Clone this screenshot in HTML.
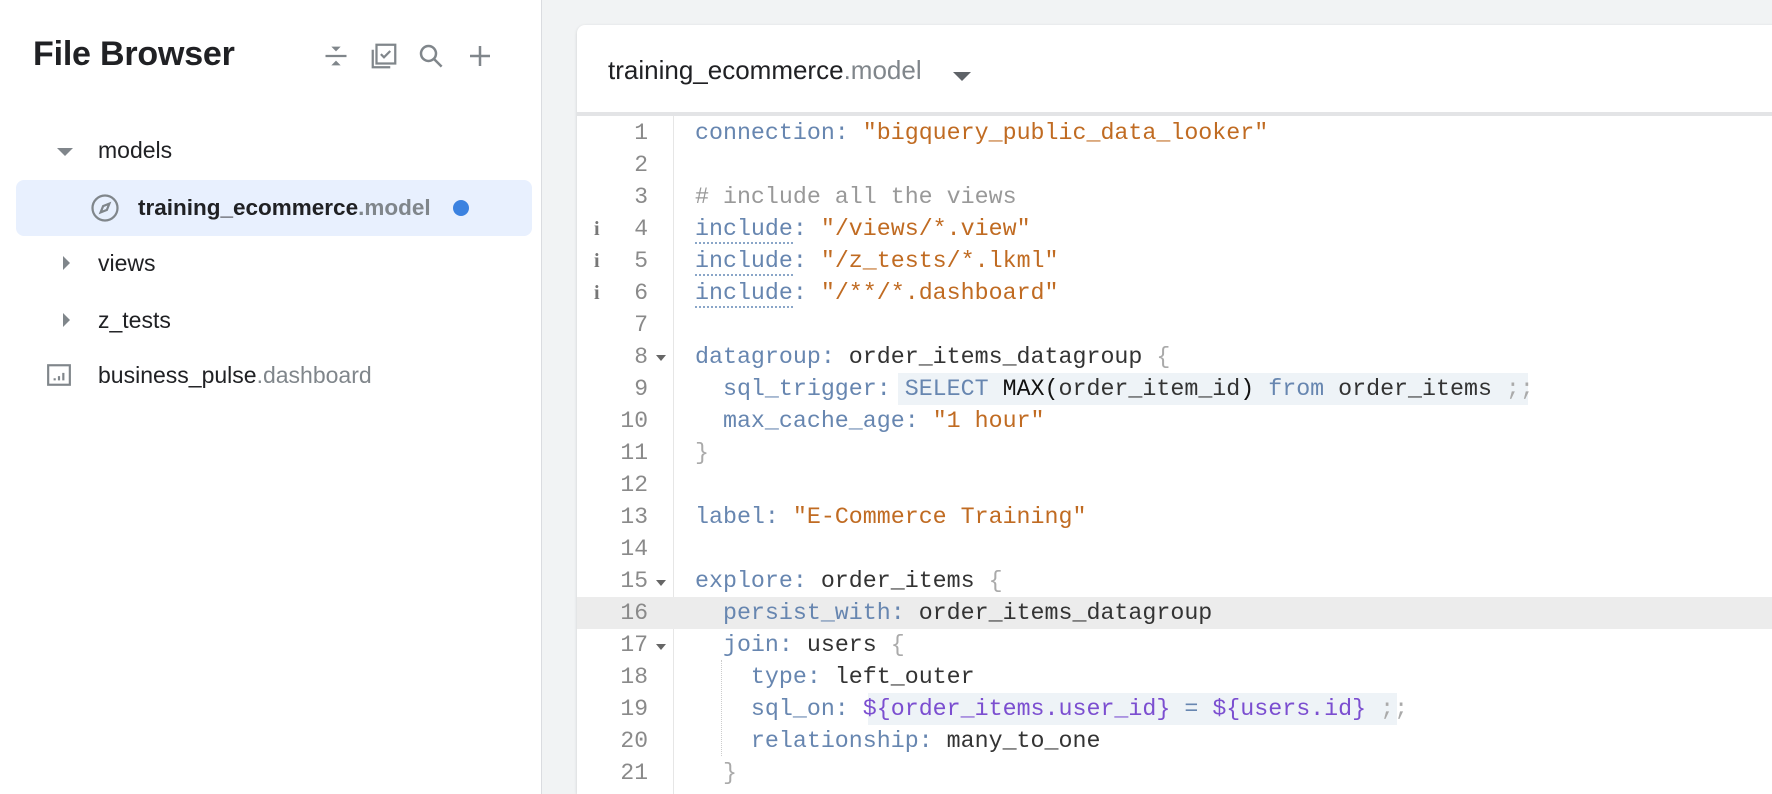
<!DOCTYPE html>
<html><head><meta charset="utf-8"><style>
*{margin:0;padding:0;box-sizing:border-box}
html,body{width:1772px;height:794px;overflow:hidden}
body{background:#f1f3f4;font-family:"Liberation Sans",sans-serif;position:relative}
#side{position:absolute;left:0;top:0;width:542px;height:794px;background:#fff;border-right:1px solid #dadce0}
.t{position:absolute;white-space:nowrap}
.title{left:33px;top:35px;font-size:34px;font-weight:bold;color:#202124;letter-spacing:-0.2px}
.row{position:absolute;font-size:23px;color:#202124;white-space:nowrap}
.g{color:#80868b}
#card{position:absolute;left:577px;top:25px;width:1220px;height:769px;background:#fff;border-radius:8px 8px 0 0;box-shadow:0 1px 3px rgba(0,0,0,.15)}
#hdrline{position:absolute;left:577px;top:112px;width:1200px;height:4px;background:#e3e4e6}
.code{font-family:"Liberation Mono",monospace;font-size:23.3px;white-space:pre;position:absolute;left:695px;line-height:32px}
.ln{position:absolute;left:600px;width:48px;text-align:right;font-family:"Liberation Mono",monospace;font-size:23px;color:#8a8a8a;line-height:32px}
.k{color:#6786b0}.s{color:#c06b22}.c{color:#999}.p{color:#333}.b{color:#aaa}.v{color:#7b4ed0}
.fold{position:absolute;left:656px;width:0;height:0;border-left:5px solid transparent;border-right:5px solid transparent;border-top:6px solid #666}
.info{position:absolute;left:594px;font-family:"Liberation Serif",serif;font-weight:bold;font-size:20px;color:#777;line-height:32px}
.ul{border-bottom:2px dotted #8aa6c8}
</style></head><body>
<div id="side">
<div class="t title">File Browser</div>
<svg style="position:absolute;left:322px;top:42px" width="28" height="28" viewBox="0 0 24 24" fill="#80868b"><path d="M3 11h18v2H3z M8 4h8l-4 4z M12 16l4 4H8z"/></svg>
<svg style="position:absolute;left:369px;top:41px" width="30" height="30" viewBox="0 0 24 24" fill="none" stroke="#80868b" stroke-width="1.8"><rect x="6" y="3" width="15" height="15"/><path d="M3 7v14h14"/><path d="M9.5 10.5l2.5 2.5 5-5"/></svg>
<svg style="position:absolute;left:416px;top:41px" width="30" height="30" viewBox="0 0 24 24" fill="none" stroke="#80868b" stroke-width="2"><circle cx="10" cy="10" r="6"/><path d="M14.5 14.5l6 6"/></svg>
<svg style="position:absolute;left:465px;top:41px" width="30" height="30" viewBox="0 0 24 24" stroke="#80868b" stroke-width="2"><path d="M12 4v16M4 12h16"/></svg>
<div style="position:absolute;left:57px;top:148px;border-left:8px solid transparent;border-right:8px solid transparent;border-top:8px solid #80868b"></div>
<div class="row" style="left:98px;top:137px">models</div>
<div style="position:absolute;left:16px;top:180px;width:516px;height:56px;background:#e8f0fe;border-radius:8px"></div>
<svg style="position:absolute;left:90px;top:193px" width="30" height="30" viewBox="0 0 24 24" fill="none" stroke="#80868b" stroke-width="1.8"><circle cx="12" cy="12" r="10"/><path d="M15.5 8.5l-2 5-5 2 2-5z"/></svg>
<div class="row" style="left:138px;top:195px;font-weight:bold;font-size:22.5px">training_ecommerce<span class="g">.model</span></div>
<div style="position:absolute;left:453px;top:200px;width:16px;height:16px;border-radius:50%;background:#3b82e0"></div>
<div style="position:absolute;left:63px;top:256px;border-top:7px solid transparent;border-bottom:7px solid transparent;border-left:7px solid #80868b"></div>
<div class="row" style="left:98px;top:250px">views</div>
<div style="position:absolute;left:63px;top:313px;border-top:7px solid transparent;border-bottom:7px solid transparent;border-left:7px solid #80868b"></div>
<div class="row" style="left:98px;top:307px">z_tests</div>
<svg style="position:absolute;left:46px;top:362px" width="26" height="26" viewBox="0 0 24 24" fill="none" stroke="#80868b" stroke-width="2"><rect x="2" y="3" width="20" height="18"/><path d="M8 17v-2M12 17v-4M16 17v-7"/></svg>
<div class="row" style="left:98px;top:362px">business_pulse<span class="g">.dashboard</span></div>
</div>
<div id="card"></div>
<div class="t" style="left:608px;top:55px;font-size:26px;color:#202124">training_ecommerce<span class="g">.model</span></div>
<div style="position:absolute;left:953px;top:72px;border-left:9px solid transparent;border-right:9px solid transparent;border-top:9px solid #5f6368"></div>
<div id="hdrline"></div>
<div style="position:absolute;left:673px;top:116px;width:1px;height:680px;background:#e6e6e6"></div>
<div style="position:absolute;left:577px;top:597px;width:1200px;height:32px;background:#ececec"></div>
<div style="position:absolute;left:898px;top:373px;width:630px;height:32px;background:#eef3f7"></div>
<div style="position:absolute;left:868px;top:693px;width:529px;height:32px;background:#eef3f7"></div>
<div style="position:absolute;left:721px;top:660px;height:96px;border-left:1px dotted #ccc"></div>
<div class="fold" style="top:355px"></div><div class="fold" style="top:580px"></div><div class="fold" style="top:644px"></div>
<div class="info" style="top:213px">i</div><div class="info" style="top:245px">i</div><div class="info" style="top:277px">i</div>
<div class="ln" style="top:117px">1<br>2<br>3<br>4<br>5<br>6<br>7<br>8<br>9<br>10<br>11<br>12<br>13<br>14<br>15<br>16<br>17<br>18<br>19<br>20<br>21</div>
<div class="code" style="top:117px"><span class="k">connection:</span> <span class="s">"bigquery_public_data_looker"</span>

<span class="c"># include all the views</span>
<span class="k ul">include</span><span class="k">:</span> <span class="s">"/views/*.view"</span>
<span class="k ul">include</span><span class="k">:</span> <span class="s">"/z_tests/*.lkml"</span>
<span class="k ul">include</span><span class="k">:</span> <span class="s">"/**/*.dashboard"</span>

<span class="k">datagroup:</span> <span class="p">order_items_datagroup</span> <span class="b">{</span>
  <span class="k">sql_trigger:</span> <span class="k">SELECT</span> <span style="color:#111">MAX(</span><span class="p">order_item_id</span><span style="color:#111">)</span> <span class="k">from</span> <span class="p">order_items</span> <span class="b">;;</span>
  <span class="k">max_cache_age:</span> <span class="s">"1 hour"</span>
<span class="b">}</span>

<span class="k">label:</span> <span class="s">"E-Commerce Training"</span>

<span class="k">explore:</span> <span class="p">order_items</span> <span class="b">{</span>
  <span class="k">persist_with:</span> <span class="p">order_items_datagroup</span>
  <span class="k">join:</span> <span class="p">users</span> <span class="b">{</span>
    <span class="k">type:</span> <span class="p">left_outer</span>
    <span class="k">sql_on:</span> <span class="v">${order_items.user_id}</span> <span class="k">=</span> <span class="v">${users.id}</span> <span class="b">;;</span>
    <span class="k">relationship:</span> <span class="p">many_to_one</span>
  <span class="b">}</span></div>
</body></html>
